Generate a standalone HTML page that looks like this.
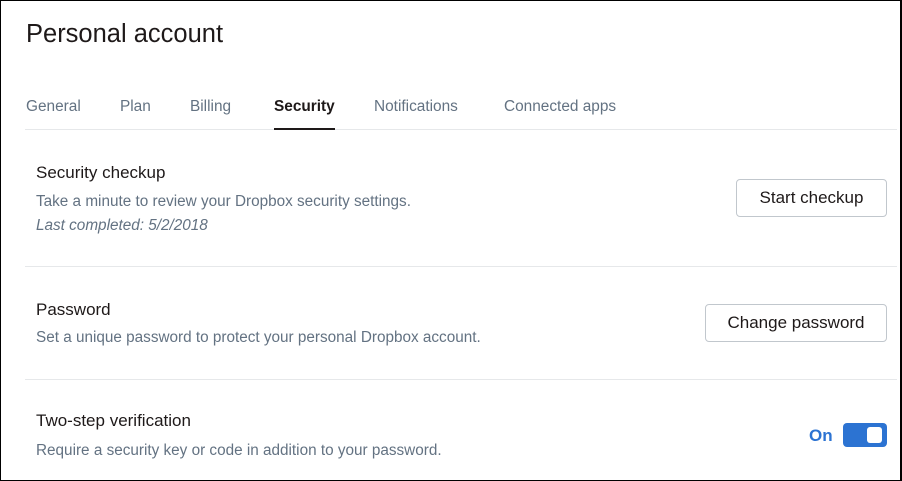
<!DOCTYPE html>
<html><head><style>
*{margin:0;padding:0;box-sizing:border-box}
body{width:902px;height:481px;background:#fff;font-family:"Liberation Sans",sans-serif;position:relative;overflow:hidden}
.frame{position:absolute;left:0;top:0;width:902px;height:481px;border:1px solid #000;border-right-width:2px}
.a{position:absolute;white-space:nowrap}
.title{left:26px;top:20px;font-size:25.5px;color:#1e1919}
.tab{top:98px;font-size:15.4px;color:#637282}
.hr{position:absolute;left:25px;right:5px;height:1px;background:#e6e8ea}
.h{font-size:17px;color:#1e1919;left:36px}
.d{font-size:15.3px;color:#637282;left:36px}
.btn{position:absolute;border:1px solid #c1c7cd;border-radius:4px;font-size:17px;color:#1e1919;display:flex;align-items:center;justify-content:center}
</style></head><body>
<div class="frame"></div>
<div class="a title">Personal account</div>
<div class="a tab" style="left:26px">General</div>
<div class="a tab" style="left:120px">Plan</div>
<div class="a tab" style="left:190px">Billing</div>
<div class="a tab" style="left:274px;color:#1e1919;font-weight:bold">Security</div>
<div class="a tab" style="left:374px">Notifications</div>
<div class="a tab" style="left:504px">Connected apps</div>
<div class="hr" style="top:129px"></div>
<div style="position:absolute;left:274px;top:128px;width:61px;height:2px;background:#1e1919"></div>
<div class="a h" style="top:163px">Security checkup</div>
<div class="a d" style="top:193px">Take a minute to review your Dropbox security settings.</div>
<div class="a d" style="top:217px;font-style:italic">Last completed: 5/2/2018</div>
<div class="btn" style="left:736px;top:179px;width:151px;height:38px">Start checkup</div>
<div class="hr" style="top:266px"></div>
<div class="a h" style="top:300px">Password</div>
<div class="a d" style="top:329px">Set a unique password to protect your personal Dropbox account.</div>
<div class="btn" style="left:705px;top:304px;width:182px;height:38px">Change password</div>
<div class="hr" style="top:379px"></div>
<div class="a h" style="top:411px">Two-step verification</div>
<div class="a d" style="top:442px">Require a security key or code in addition to your password.</div>
<div class="a" style="left:809px;top:426px;font-size:17px;font-weight:bold;color:#2c73d2">On</div>
<div style="position:absolute;left:843px;top:423px;width:44px;height:24px;background:#2c73d2;border-radius:4px"><div style="position:absolute;right:5px;top:4px;width:15px;height:16px;background:#fff;border-radius:3px"></div></div>
</body></html>
